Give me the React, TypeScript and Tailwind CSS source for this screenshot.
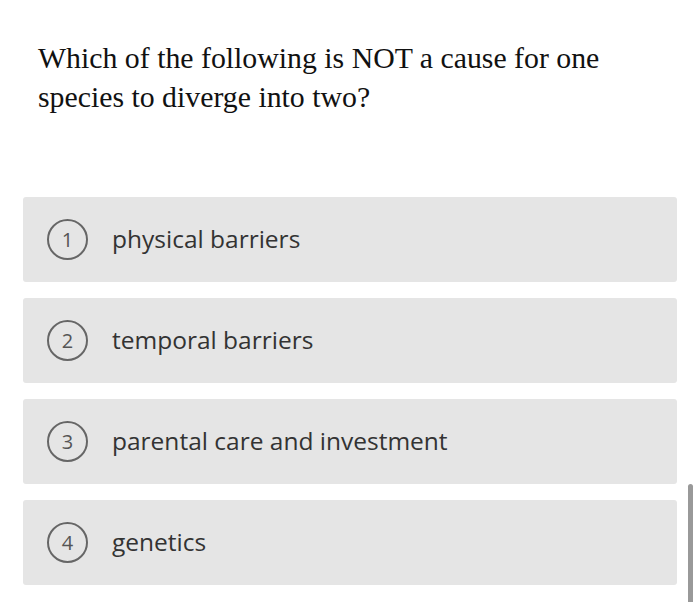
import React from "react";

const options = [
	"physical barriers",
	"temporal barriers",
	"parental care and investment",
	"genetics",
];

export default function App() {
	return (
		<div className="relative w-[700px] h-[602px] overflow-hidden bg-white">
			{/* Question */}
			<div className="pl-[38px] pt-[38px] pr-4 font-['Liberation_Serif',serif] text-[29.8px] leading-[39px] text-[#111]">
				Which of the following is NOT a cause for one
				<br />
				species to diverge into two?
			</div>

			{/* Options */}
			<div className="mt-[81px] ml-[23px] w-[654px] flex flex-col gap-[16px]">
				{options.map((opt, i) => (
					<div
						key={opt}
						className="h-[85px] rounded-[3px] bg-[#e5e5e5] flex items-center pl-[24px]"
					>
						<div className="w-[41px] h-[41px] rounded-full border-2 border-[#666] flex items-center justify-center font-['Open_Sans',sans-serif] text-[20px] text-[#555]">
							{i + 1}
						</div>
						<span className="ml-[24px] font-['Open_Sans',sans-serif] text-[24.5px] text-[#333]">
							{opt}
						</span>
					</div>
				))}
			</div>

			{/* Scrollbar */}
			<div className="absolute left-[688px] top-[484px] w-[5px] h-[130px] rounded-full bg-[#999]" />
		</div>
	);
}
